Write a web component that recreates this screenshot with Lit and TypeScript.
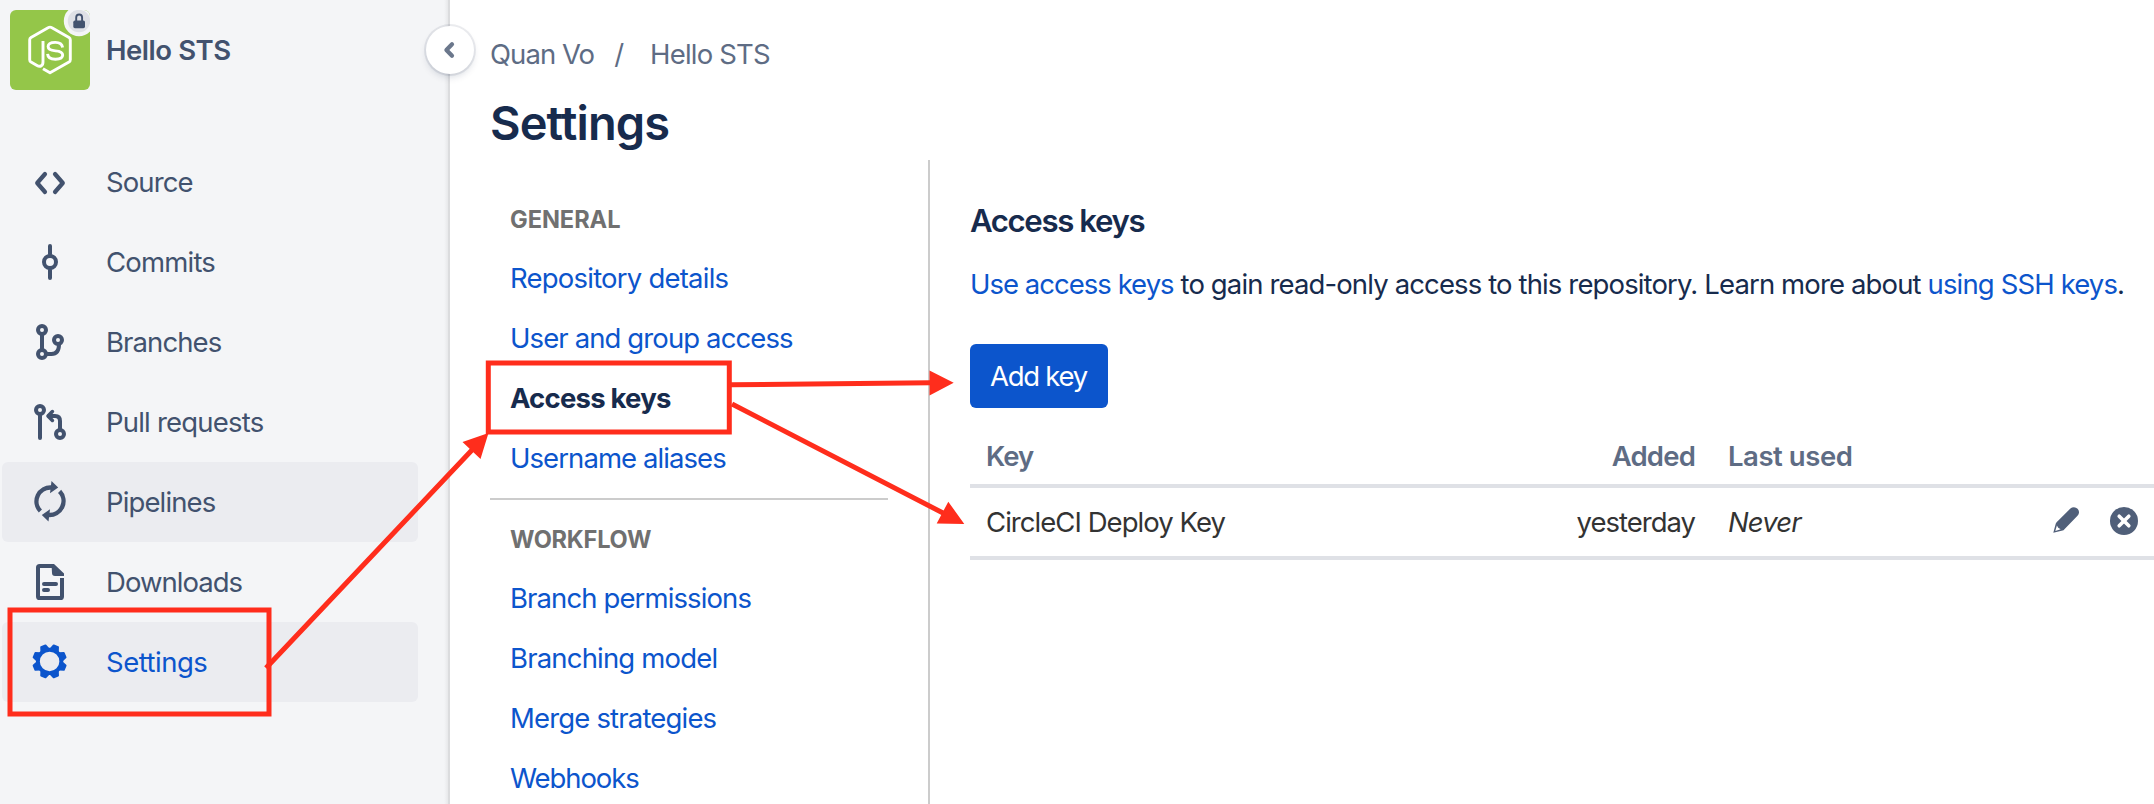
import { LitElement, html, css, svg } from "lit";
import type { SVGTemplateResult } from "lit";
import { customElement } from "lit/decorators.js";
import { classMap } from "lit/directives/class-map.js";
import { styleMap } from "lit/directives/style-map.js";

type NavItem = {
  label: string;
  icon: SVGTemplateResult;
  tracking: number;
  highlighted?: boolean;
  selected?: boolean;
};

type SettingsLink = { label: string; tracking: number; current?: boolean };
type SettingsGroup = { heading: string; tracking: number; links: SettingsLink[] };

const gearTeeth = [22.5, 67.5, 112.5, 157.5, 202.5, 247.5, 292.5, 337.5];

const icons = {
  source: svg`<g fill="none" stroke="currentColor" stroke-width="4.2" stroke-linecap="round" stroke-linejoin="round">
    <path d="M19 16 11.2 25 19 34M29 16 36.8 25 29 34"/></g>`,
  commits: svg`<g fill="none" stroke="currentColor" stroke-width="4" stroke-linecap="round">
    <circle cx="24" cy="24" r="6"/><path d="M24 8v8M24 32v8"/></g>`,
  branches: svg`<g fill="none" stroke="currentColor" stroke-width="4">
    <circle cx="16" cy="12" r="4"/><circle cx="16" cy="36" r="4"/><circle cx="32" cy="22" r="4"/>
    <path d="M16 16v16M20 36h5.5c5 0 7.5-3 7.5-10"/></g>`,
  pulls: svg`<g fill="none" stroke="currentColor" stroke-width="4" stroke-linecap="round" stroke-linejoin="round">
    <circle cx="14" cy="12" r="4"/><circle cx="34" cy="36" r="4"/>
    <path d="M14 17v23M34 31v-8q0-5-5-5h-6"/><path stroke-width="3.6" d="M26.4 13.6 22 18l4.400 4.400"/></g>`,
  pipelines: svg`<g fill="none" stroke="currentColor" stroke-width="4.400">
    <path d="M14.400 33A13.900 13.900 0 0 1 25.500 9.500M33.600 13.400A13.900 13.900 0 0 1 22.500 36.900"/></g>
    <path fill="currentColor" d="M25.500 3 32.200 9.400 24 15.200zM22.500 43.400 15.800 37 24 31.200z"/>`,
  downloads: svg`<g fill="none" stroke="currentColor" stroke-width="4">
    <path stroke-linejoin="round" d="M27.500 8H13.600Q12 8 12 9.600V38.400Q12 40 13.600 40H34.400Q36 40 36 38.400V20"/>
    <path stroke-linecap="round" d="M18 26h12M18 32h4"/></g>
    <path fill="currentColor" d="M25.500 6H28L38 15.500V18H29Q26 18 26 15z"/>`,
  settings: svg`<g transform="translate(23.600 23.400)" fill="currentColor" stroke="currentColor">
    <circle r="11.700" fill="none" stroke-width="3.900"/>
    ${gearTeeth.map((a) => svg`<path transform=${`rotate(${a})`} stroke-width="2" stroke-linejoin="round" d="M-3.900-12-2.300-16.300H2.300L3.900-12z"/>`)}
  </g>`,
};

const navItems: NavItem[] = [
  { label: "Source", icon: icons.source, tracking: -0.9 },
  { label: "Commits", icon: icons.commits, tracking: -0.8 },
  { label: "Branches", icon: icons.branches, tracking: -0.9 },
  { label: "Pull requests", icon: icons.pulls, tracking: -0.79 },
  { label: "Pipelines", icon: icons.pipelines, tracking: -0.87, highlighted: true },
  { label: "Downloads", icon: icons.downloads, tracking: -0.97 },
  { label: "Settings", icon: icons.settings, tracking: -0.5, highlighted: true, selected: true },
];

const groups: SettingsGroup[] = [
  {
    heading: "GENERAL",
    tracking: -0.05,
    links: [
      { label: "Repository details", tracking: -0.78 },
      { label: "User and group access", tracking: -0.89 },
      { label: "Access keys", tracking: -0.78, current: true },
      { label: "Username aliases", tracking: -0.93 },
    ],
  },
  {
    heading: "WORKFLOW",
    tracking: -0.25,
    links: [
      { label: "Branch permissions", tracking: -0.89 },
      { label: "Branching model", tracking: -0.82 },
      { label: "Merge strategies", tracking: -0.83 },
      { label: "Webhooks", tracking: -1.1 },
    ],
  },
];

const track = (px: number) => styleMap({ letterSpacing: `${px}px` });

@customElement("repo-sidebar")
export class RepoSidebar extends LitElement {
  static styles = css`
    :host {
      display: block;
      position: relative;
      box-sizing: border-box;
      width: 450px;
      height: 804px;
      padding-left: 2px;
      color: #42526e;
      background:
        linear-gradient(to left, rgba(0, 0, 0, 0.1) 0 2px, rgba(0, 0, 0, 0.05) 2px, transparent 6px) right / 6px 100% no-repeat,
        #f4f5f7;
    }
    .header {
      display: flex;
      align-items: center;
      gap: 16px;
      padding: 10px 0 0 8px;
      height: 80px;
    }
    .logo { display: block; width: 80px; height: 80px; }
    .name { font-weight: 600; letter-spacing: -0.45px; }
    .nav { padding-top: 52px; width: 416px; }
    .item {
      display: flex;
      align-items: center;
      gap: 32px;
      height: 80px;
      padding-left: 24px;
      box-sizing: border-box;
      border-radius: 6px;
      white-space: nowrap;
    }
    .highlighted { background: #ebecf0; }
    .selected { color: #0c55cc; }
    .icon { width: 48px; height: 48px; flex: none; }
    .collapse {
      position: absolute;
      z-index: 2;
      left: 426px;
      top: 26px;
      width: 48px;
      height: 48px;
      border-radius: 50%;
      background: #fff;
      box-shadow: 0 0 0 2px rgba(9, 30, 66, 0.08), 0 4px 8px -2px rgba(9, 30, 66, 0.2);
    }
    .collapse svg { display: block; }
  `;

  render() {
    return html`
      <div class="header">
        <svg class="logo" viewBox="0 0 80 80">
          <defs><clipPath id="tile"><rect width="80" height="80" rx="6"/></clipPath></defs>
          <g clip-path="url(#tile)">
            <rect width="80" height="80" fill="#94c649"/>
            <circle cx="69" cy="11" r="15.200" fill="#f4f5f7"/>
          </g>
          <circle cx="69" cy="11" r="11.200" fill="#dfe1e6"/>
          <rect x="63.300" y="10.600" width="11.700" height="7.600" rx="1.600" fill="#42526e"/>
          <path d="M66.200 11V7.500a2.900 2.900 0 0 1 5.900 0V11" fill="none" stroke="#42526e" stroke-width="1.900"/>
          <g fill="none" stroke="#fff" stroke-width="2.900" stroke-linejoin="round">
            <path d="M33 31V52c0 4-3 5.200-6 3.500l-6-3.400q-1.300-.8-1.300-2.400V29.700q0-1.500 1.300-2.300L38.500 17.600q1.500-.9 3 0L59 27.400q1.300.8 1.300 2.300V49.700q0 1.600-1.300 2.400L40 62.700 33 58.700"/>
            <path d="M52.600 37.500c-.5-3.400-3-5.100-7.300-5.100-4.600 0-7.200 1.600-7.200 4.200 0 3 2.500 3.900 7.300 4.300 4.800.4 7.300 1.200 7.300 4.200 0 2.800-2.600 4.100-7.200 4.100-4.800 0-7.700-1.700-7.900-5.400"/>
          </g>
        </svg>
        <span class="name">Hello STS</span>
      </div>
      <nav class="nav">
        ${navItems.map(
          (item) => html`<div class=${classMap({ item: true, highlighted: !!item.highlighted, selected: !!item.selected })}>
            <svg class="icon" viewBox="0 0 48 48">${item.icon}</svg>
            <span style=${track(item.tracking)}>${item.label}</span>
          </div>`
        )}
      </nav>
      <div class="collapse">
        <svg width="48" height="48" viewBox="0 0 48 48">
          <path d="M26 18.200 20.400 24 26 29.800" fill="none" stroke="#6b778c" stroke-width="4.200" stroke-linecap="round" stroke-linejoin="round"/>
        </svg>
      </div>
    `;
  }
}

@customElement("settings-menu")
export class SettingsMenu extends LitElement {
  static styles = css`
    :host { display: block; width: 398px; }
    .group { padding: 38px 0 10px 20px; white-space: nowrap; }
    .rule { height: 2px; width: 398px; background: #ccc; }
    .heading { height: 43px; line-height: 43px; font-size: 23.6px; font-weight: 700; color: #707070; margin-bottom: 7px; }
    .link { height: 60px; line-height: 60px; color: #0c55cc; }
    .current { color: #172b4d; font-weight: 700; }
    .workflow { padding-top: 18px; }
  `;

  render() {
    return groups.map(
      (g, i) => html`
        ${i ? html`<div class="rule"></div>` : null}
        <section class=${classMap({ group: true, workflow: i > 0 })}>
          <div class="heading" style=${track(g.tracking)}>${g.heading}</div>
          ${g.links.map(
            (l) => html`<div class=${classMap({ link: true, current: !!l.current })} style=${track(l.tracking)}>${l.label}</div>`
          )}
        </section>
      `
    );
  }
}

@customElement("access-keys")
export class AccessKeys extends LitElement {
  static styles = css`
    :host { display: block; flex: 1; min-width: 0; color: #172b4d; white-space: nowrap; }
    .title { margin: 0; padding-top: 41px; height: 41px; line-height: 41px; font-size: 31.2px; font-weight: 600; letter-spacing: -1.4px; }
    .intro { margin: 0; padding-top: 22px; height: 40px; line-height: 40px; letter-spacing: -0.869px; }
    .link { color: #0c55cc; }
    .lead { letter-spacing: -0.98px; }
    .button {
      display: block;
      margin: 40px 0 0;
      width: 138px;
      height: 64px;
      padding: 0 1px 0 0;
      border: 0;
      border-radius: 6px;
      background: #0c55cc;
      color: #fff;
      font: inherit;
      line-height: 64px;
      text-align: center;
      letter-spacing: -1.25px;
    }
    .table { margin-top: 16px; }
    .row {
      display: grid;
      grid-template-columns: 590px 152px 1fr auto;
      align-items: center;
      box-sizing: border-box;
      height: 72px;
      border-bottom: 4px solid #dfe1e6;
      color: #333;
      letter-spacing: -0.95px;
    }
    .head { height: 64px; padding-top: 4px; color: #5e6c84; font-weight: 600; }
    .cell { padding: 0 16px; }
    .added { text-align: right; padding-right: 17px; }
    .yesterday { letter-spacing: -1px; }
    .addedhead { letter-spacing: -0.8px; }
    .used { letter-spacing: -0.45px; }
    .never { font-style: italic; letter-spacing: -0.9px; }
    .actions { display: flex; align-items: center; gap: 31px; padding-right: 16px; }
    .actions svg { display: block; }
    .pencil { margin-bottom: 4px; }
    .remove { margin-bottom: 2px; }
  `;

  render() {
    return html`
      <h2 class="title">Access keys</h2>
      <p class="intro"><span class="link lead">Use access keys</span> to gain read-only access to this repository. Learn more about <span class="link">using SSH keys</span>.</p>
      <button class="button">Add key</button>
      <div class="table">
        <div class="row head">
          <div class="cell">Key</div>
          <div class="cell added addedhead">Added</div>
          <div class="cell used">Last used</div>
        </div>
        <div class="row">
          <div class="cell">CircleCI Deploy Key</div>
          <div class="cell added yesterday">yesterday</div>
          <div class="cell never">Never</div>
          <div class="actions">
            <svg class="pencil" width="26" height="26" viewBox="0 0 26 26">
              <path fill="#505f79" d="M17.400 1.600A4.900 4.900 0 0 1 24.500 8.800L11.200 22.400Q10.600 23.200 9.600 23.400L.300 25.800 2.800 16.600Q3 15.800 3.600 15.200z"/>
              <path fill="#fff" d="M3.900 18.600 5.200 20.800 7.700 22.300 2.300 23.900z"/>
            </svg>
            <svg class="remove" width="28" height="28" viewBox="0 0 28 28">
              <circle cx="14" cy="14" r="14" fill="#505f79"/>
              <path d="M9.200 9.200l9.600 9.600M18.800 9.200l-9.600 9.600" stroke="#fff" stroke-width="3.600" stroke-linecap="round"/>
            </svg>
          </div>
        </div>
      </div>
    `;
  }
}

@customElement("app-root")
export class AppRoot extends LitElement {
  static styles = css`
    :host {
      display: flex;
      position: relative;
      width: 2154px;
      height: 804px;
      overflow: hidden;
      background: #fff;
      font: 400 27.5px/40px Inter, "Liberation Sans", sans-serif;
    }
    .main { flex: 1; min-width: 0; padding-left: 40px; }
    .crumbs { display: flex; padding-top: 34px; height: 40px; color: #5e6c84; white-space: nowrap; }
    .owner { letter-spacing: -0.95px; }
    .slash { padding: 0 26px 0 20px; }
    .repo { letter-spacing: -0.8px; }
    .heading { margin: 0; padding-top: 19px; height: 60px; line-height: 60px; font-size: 47px; font-weight: 600; letter-spacing: -0.89px; color: #172b4d; }
    .body { display: flex; padding-top: 7px; }
    .divider { width: 2px; height: 644px; margin: 0 40px; background: #ccc; flex: none; }
    .notes { position: absolute; inset: 0; z-index: 3; pointer-events: none; }
  `;

  render() {
    return html`
      <repo-sidebar></repo-sidebar>
      <main class="main">
        <div class="crumbs">
          <span class="owner">Quan Vo</span><span class="slash">/</span><span class="repo">Hello STS</span>
        </div>
        <h1 class="heading">Settings</h1>
        <div class="body">
          <settings-menu></settings-menu>
          <div class="divider"></div>
          <access-keys></access-keys>
        </div>
      </main>
      <svg class="notes" width="2154" height="804" viewBox="0 0 2154 804">
        <g fill="none" stroke="#ff2d1c" stroke-width="5">
          <rect x="10" y="610" width="259" height="104"/>
          <rect x="488.300" y="363" width="241" height="69"/>
          <path d="M266 668 472 450M731 384.700 931 382.800M732 404 944 513.500"/>
        </g>
        <path fill="#ff2d1c" d="M488.500 433 462.500 442 480.500 459zM953.700 382.700 929.500 370.500V395.500zM964.300 524 948.300 501.700 936.700 523.500z"/>
      </svg>
    `;
  }
}
